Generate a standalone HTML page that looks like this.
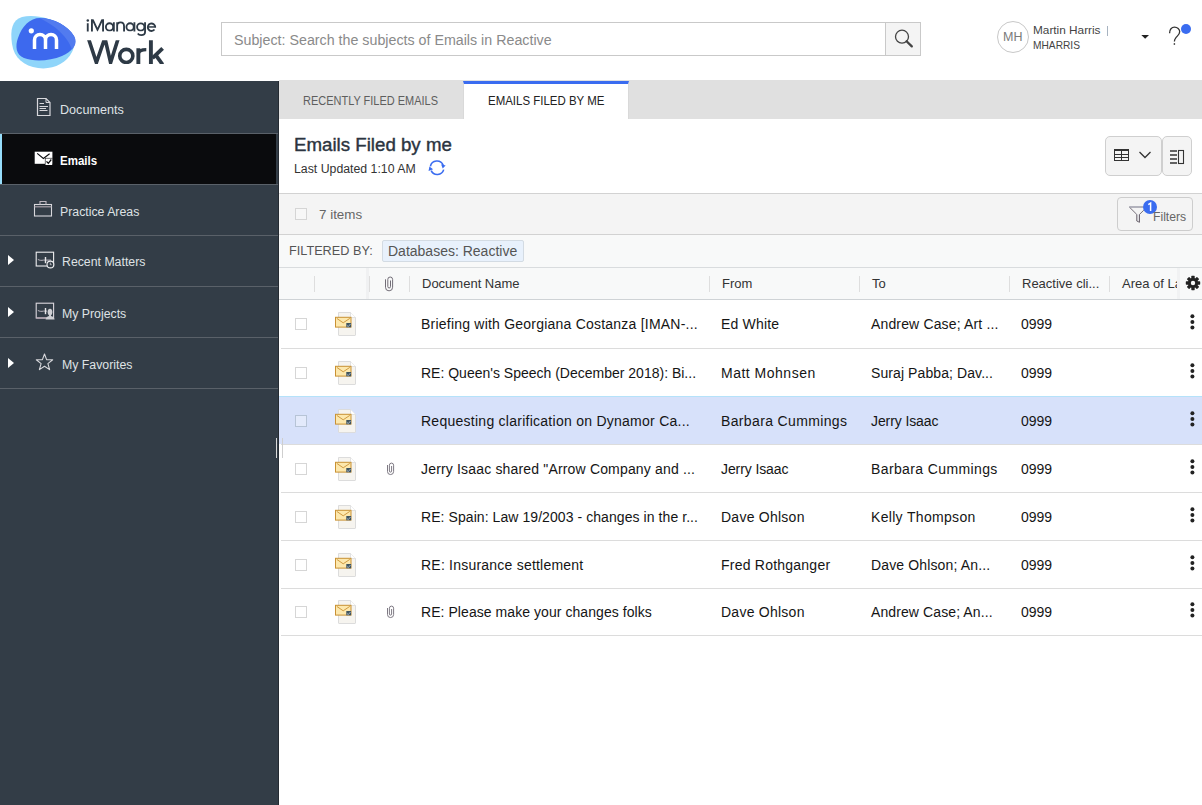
<!DOCTYPE html>
<html><head><meta charset="utf-8">
<style>
*{box-sizing:border-box;margin:0;padding:0}
html,body{width:1202px;height:805px;overflow:hidden;background:#fff;font-family:"Liberation Sans",sans-serif;position:relative}
.abs{position:absolute}
.t{position:absolute;white-space:nowrap;line-height:1}
/* header */
#header{left:0;top:0;width:1202px;height:80px;background:#fff}
#search{left:221px;top:22px;width:700px;height:34px;border:1px solid #c9c9c9;background:#fff}
#sbtn{left:885px;top:22px;width:36px;height:34px;border:1px solid #c9c9c9;background:#f4f4f4}
/* sidebar */
#side{left:0;top:81px;width:279px;height:724px;background:#333d47;border-right:1px solid #252b32}
.sep{position:absolute;left:0;width:278px;height:1px;background:#5a6169}
.nav{color:#dfe2e5;font-size:12.3px}
/* tabs */
#tabs{left:279px;top:80px;width:923px;height:39px;background:#e0e0e0}
#tab2{left:463px;top:81px;width:166px;height:38px;background:#fff;border-top:3px solid #3a6cf0;border-left:1px solid #d9d9d9;border-right:1px solid #d9d9d9}
/* content */
.row{position:absolute;left:279px;width:923px;height:48px}
.cell{position:absolute;font-size:14px;color:#151515;white-space:nowrap;line-height:1}
.cb{position:absolute;width:12px;height:12px;border:1px solid #d3d3d3;background:#fff}
.hsep{position:absolute;top:276px;width:1px;height:16px;background:#dedede}
.kebab{position:absolute;left:1190px;width:5px;height:15px}
.kebab i{position:absolute;left:0.6px;width:3.8px;height:3.8px;border-radius:50%;background:#222;margin-top:0.4px}
</style></head>
<body>
<div id="header" class="abs">
  <!-- logo -->
  <svg class="abs" style="left:0;top:0" width="80" height="80" viewBox="0 0 80 80">
    <path d="M22 17 C34 14 52 18 64 26 C76 34 76 44 72 52 C66 64 52 70 38 68 C24 66 14 58 12 44 C10 30 12 20 22 17 Z" fill="#8fd5fa"/>
    <path d="M40 18 C54 18 68 26 74 36 C78 44 72 52 62 56 C50 61 34 62 24 58 C16 55 15 46 18 38 C22 26 30 18 40 18 Z" fill="#3d69ee"/>
    <path d="M39 17.9 C54 18 68 26 74 36 C77 41 75.5 46 72 49.5 C70 42 60 27 39 17.9 Z" fill="#527bef"/>
    <circle cx="31.3" cy="30.8" r="2.6" fill="#fff"/>
    <path d="M34.5 49 V40 C34.5 36.5 37 34.5 40 34.5 C43 34.5 45.5 36.5 45.5 40 V49 M45.5 40 C45.5 36.5 48 34.5 51 34.5 C54 34.5 56.5 36.5 56.5 40 V49" fill="none" stroke="#fff" stroke-width="3.5"/>
  </svg>
  <svg class="abs" style="left:80px;top:14px" width="84" height="26" viewBox="80 14 84 26">
  <defs><clipPath id="ic"><rect x="80" y="19.3" width="84" height="12.2"/></clipPath></defs>
  <circle cx="87.8" cy="20.6" r="1.25" fill="#2e3a46"/>
  <g fill="none" stroke="#2e3a46" stroke-width="1.85">
    <g clip-path="url(#ic)">
      <path d="M87.75 23.2 V32"/>
      <path d="M91.95 32 V18 L97.5 29.8 L103.05 18 V32" stroke-linejoin="miter" stroke-miterlimit="8"/>
      <circle cx="109.55" cy="26.9" r="3.65"/>
      <path d="M113.85 22.3 V32"/>
      <path d="M117.15 22.3 V32 M117.15 26.2 C117.15 23.6 118.7 22.4 120.6 22.4 C122.7 22.4 124.05 23.7 124.05 26.2 V32"/>
      <circle cx="130.1" cy="26.9" r="3.65"/>
      <path d="M134.4 22.3 V32"/>
      <circle cx="140.75" cy="26.95" r="3.65"/>
    </g>
    <path d="M145.05 22.3 V32 C145.05 34.4 143.4 35.1 141.2 35.1 C139.6 35.1 138.5 34.6 137.8 33.5"/>
  </g>
  <path d="M155.3 27.2 A3.75 3.75 0 1 0 154.5 29.55" fill="none" stroke="#2e3a46" stroke-width="1.85"/>
  <path d="M148 26.95 H156" stroke="#2e3a46" stroke-width="1.5"/>
</svg>
  <svg class="abs" style="left:80px;top:30px" width="90" height="40" viewBox="80 30 90 40">
  <defs><clipPath id="wc"><rect x="80" y="40.2" width="90" height="23.8"/></clipPath></defs>
  <g fill="none" stroke="#2e3a46" stroke-width="3.9" clip-path="url(#wc)">
    <path d="M87.8 36.5 L96.4 62.6 L104.9 38 L110.6 62.6 L118.8 36.5" stroke-linejoin="miter" stroke-miterlimit="10" stroke-width="3.6"/>
    <circle cx="126.3" cy="55.9" r="6.55" stroke-width="3.6"/>
    <path d="M138.35 64.5 V48.2"/>
    <path d="M138.35 53.5 C139 50.5 141.5 49.6 146.3 49.6" stroke-width="3.4"/>
    <path d="M150.9 39 V64.5"/>
    <path d="M152.5 58.2 L162.6 48.4" stroke-width="3.8"/>
    <path d="M155.4 54.6 L162.6 64.5" stroke-width="3.8"/>
  </g>
</svg>
</div>
<div id="search" class="abs"></div>
<div class="t" style="left:234px;top:33px;font-size:14.25px;color:#8a8a8a">Subject: Search the subjects of Emails in Reactive</div>
<div id="sbtn" class="abs">
  <svg class="abs" style="left:0;top:0" width="36" height="34" viewBox="0 0 36 34">
    <circle cx="16" cy="13.7" r="6.5" fill="none" stroke="#444" stroke-width="1.3"/>
    <path d="M20.6 18.3 L25.8 23.4" stroke="#444" stroke-width="2.3" stroke-linecap="round"/>
  </svg>
</div>
<!-- user -->
<div class="abs" style="left:997px;top:21px;width:32px;height:32px;border:1px solid #c8c8c8;border-radius:50%"></div>
<div class="t" style="left:1003px;top:31px;font-size:12.5px;color:#7a7a7a">MH</div>
<div class="t" style="left:1033px;top:25px;font-size:11.8px;color:#444">Martin Harris</div>
<div class="abs" style="left:1107px;top:26px;width:1px;height:10px;background:#a7b3c0"></div>
<div class="t" style="left:1033px;top:41px;font-size:10.2px;color:#444">MHARRIS</div>
<svg class="abs" style="left:1140px;top:34px" width="10" height="6"><path d="M1.3 1 L9 1 L5.15 4.8 Z" fill="#222"/></svg>
<svg class="abs" style="left:1160px;top:20px" width="24" height="28" viewBox="0 0 24 28"><path d="M9.6 13.3 C9.4 9.4 11.8 7.2 14.5 7.2 C17.4 7.2 19.7 9.3 19.7 11.8 C19.7 14.5 17.5 15.8 15.8 17.8 C14.8 19 14.4 20 14.4 21.6" fill="none" stroke="#333" stroke-width="1.3"/><path d="M14.4 23.2 V24.8" stroke="#333" stroke-width="1.4"/></svg>
<div class="abs" style="left:1181px;top:23.8px;width:10px;height:10px;border-radius:50%;background:#3a6cf0"></div>

<!-- sidebar -->
<div id="side" class="abs"></div>
<div class="sep" style="top:133px"></div>
<div class="abs" style="left:0;top:134px;width:276px;height:50px;background:#0a0b0d"></div>
<div class="abs" style="left:0;top:134px;width:2px;height:50px;background:#96ddfa"></div>
<div class="sep" style="top:184px"></div>
<div class="sep" style="top:235px"></div>
<div class="sep" style="top:286px"></div>
<div class="sep" style="top:337px"></div>
<div class="sep" style="top:388px"></div>
<!-- doc icon -->
<svg class="abs" style="left:36px;top:97px" width="16" height="20" viewBox="0 0 16 20">
  <path d="M1.5 1.5 H10 L14 5.5 V18.5 H1.5 Z" fill="none" stroke="#d8d8dc" stroke-width="1.2"/>
  <path d="M10 1.5 V5.5 H14" fill="none" stroke="#d8d8dc" stroke-width="1"/>
  <path d="M3.5 6.5 H8 M3.5 9.5 H12 M3.5 11.5 H10 M3.5 13.5 H11.5" stroke="#d8d8dc" stroke-width="1"/>
</svg>
<div class="t nav" style="left:60px;top:104px;font-size:12.6px">Documents</div>
<!-- email icon -->
<svg class="abs" style="left:34px;top:151px" width="20" height="15" viewBox="0 0 20 15">
  <rect x="0.7" y="0.7" width="17.7" height="12.1" fill="#fff"/>
  <path d="M3.2 2.4 L9.4 7.5 L15.6 2.8" fill="none" stroke="#0a0b0d" stroke-width="1.1"/>
  <rect x="10.9" y="6.9" width="7.6" height="7.6" fill="#0a0b0d"/>
  <rect x="11.5" y="7.5" width="6.7" height="6.5" fill="#fff"/>
  <path d="M12.5 10.4 L14.3 12.3 L17.3 8.5" fill="none" stroke="#0a0b0d" stroke-width="1.3"/>
</svg>
<div class="t nav" style="left:60px;top:155px;color:#fff;font-weight:bold;font-size:12.4px;transform:scaleX(0.93);transform-origin:0 0">Emails</div>
<!-- briefcase -->
<svg class="abs" style="left:33px;top:200px" width="20" height="17" viewBox="0 0 20 17">
  <rect x="1.5" y="4.5" width="17" height="11.5" fill="none" stroke="#d8d8dc" stroke-width="1.1"/>
  <path d="M1.5 6.8 H18.5" stroke="#a9a2ab" stroke-width="1.2"/>
  <path d="M7 4.5 V1.5 H13 V4.5" fill="none" stroke="#bdb6bf" stroke-width="1.1"/>
</svg>
<div class="t nav" style="left:60px;top:206px">Practice Areas</div>
<!-- arrows -->
<svg class="abs" style="left:7px;top:254px" width="8" height="12"><path d="M1 1 L7 6 L1 11 Z" fill="#fff"/></svg>
<svg class="abs" style="left:7px;top:306px" width="8" height="12"><path d="M1 1 L7 6 L1 11 Z" fill="#fff"/></svg>
<svg class="abs" style="left:7px;top:357px" width="8" height="12"><path d="M1 1 L7 6 L1 11 Z" fill="#fff"/></svg>
<!-- recent matters icon -->
<svg class="abs" style="left:35px;top:251px" width="20" height="19" viewBox="0 0 20 19">
  <rect x="1.2" y="1.2" width="17.4" height="13.8" fill="none" stroke="#eeeef0" stroke-width="1.1"/>
  <path d="M2.8 8.4 C4.5 9.4 6.5 9.6 8.5 9.1 H16" fill="none" stroke="#c9c3cc" stroke-width="0.9"/>
  <path d="M10.5 6 V12.2" stroke="#e8e8ea" stroke-width="1.4"/>
  <circle cx="15.4" cy="13.5" r="3.4" fill="#333d47" stroke="#eeeef0" stroke-width="1.1"/>
  <path d="M15.3 11.6 V13.7 H16.6" fill="none" stroke="#d8d8dc" stroke-width="0.8"/>
</svg>
<div class="t nav" style="left:62px;top:256px">Recent Matters</div>
<!-- my projects icon -->
<svg class="abs" style="left:35px;top:302px" width="20" height="19" viewBox="0 0 20 19">
  <rect x="1.2" y="1.2" width="17.4" height="14.8" fill="none" stroke="#dcd8de" stroke-width="1.1"/>
  <path d="M1.2 16 H12" stroke="#b7a6b3" stroke-width="1.2"/>
  <path d="M2.8 8.4 C4.5 9.4 6.5 9.6 8.5 9.1 H12" fill="none" stroke="#c9c3cc" stroke-width="0.9"/>
  <path d="M10.5 6 V12.2" stroke="#e8e8ea" stroke-width="1.4"/>
  <path d="M15 6.8 C13.4 6.8 12.6 8.2 12.6 10 C12.6 11.6 13.3 12.8 14 13.2 L14 14 C12 14.5 11 15.5 10.6 17.6 H19.6 C19.3 15.5 18.2 14.5 16 14 V13.2 C16.8 12.8 17.4 11.6 17.4 10 C17.4 8.2 16.6 6.8 15 6.8 Z" fill="#d0d0d4"/>
</svg>
<div class="t nav" style="left:62px;top:308px">My Projects</div>
<!-- star -->
<svg class="abs" style="left:35px;top:353px" width="19" height="18" viewBox="0 0 19 18">
  <path d="M9.5 1 L11.6 6.6 L17.7 6.8 L12.9 10.6 L14.6 16.6 L9.5 13.2 L4.4 16.6 L6.1 10.6 L1.3 6.8 L7.4 6.6 Z" fill="none" stroke="#d8d8dc" stroke-width="1.1" stroke-linejoin="round"/>
</svg>
<div class="t nav" style="left:62px;top:359px">My Favorites</div>
<div class="abs" style="left:276px;top:438px;width:1px;height:20px;background:#d8d8d8"></div>
<!--HANDLE2-->

<!-- tabs -->
<div id="tabs" class="abs"></div>
<div class="t" style="left:303px;top:95px;font-size:12.8px;color:#5e5e5e;transform:scaleX(0.858);transform-origin:0 0">RECENTLY FILED EMAILS</div>
<div id="tab2" class="abs"></div>
<div class="t" style="left:488px;top:95px;font-size:12.8px;color:#222;transform:scaleX(0.896);transform-origin:0 0">EMAILS FILED BY ME</div>

<!-- title -->
<div class="t" style="left:294px;top:136px;font-size:18.7px;color:#2b3440;-webkit-text-stroke:0.4px #2b3440">Emails Filed by me</div>
<div class="t" style="left:294px;top:163px;font-size:12.3px;color:#333">Last Updated 1:10 AM</div>
<svg class="abs" style="left:428px;top:159px" width="18" height="18" viewBox="0 0 18 18">
  <path d="M2.4 7.4 A6.7 6.7 0 0 1 15.2 6.3" fill="none" stroke="#3a6cf0" stroke-width="1.6"/>
  <path d="M13.1 5.3 L17.6 6.4 L14.7 9.6 Z" fill="#3a6cf0"/>
  <path d="M15.7 10.6 A6.7 6.7 0 0 1 3.2 11.6" fill="none" stroke="#3a6cf0" stroke-width="1.6"/>
  <path d="M0.6 12.1 L5.1 10.3 L1.4 7.6 Z" fill="#3a6cf0"/>
</svg>
<!-- view buttons -->
<div class="abs" style="left:1105px;top:136px;width:57px;height:40px;border:1px solid #cfcfcf;border-radius:5px;background:#f4f4f4"></div>
<div class="abs" style="left:1162px;top:136px;width:30px;height:40px;border:1px solid #cfcfcf;border-radius:5px;background:#f4f4f4"></div>
<svg class="abs" style="left:1113px;top:148px" width="18" height="14" viewBox="0 0 18 14">
  <rect x="1.5" y="1.5" width="14" height="11" fill="none" stroke="#333" stroke-width="1"/>
  <rect x="1" y="1" width="15" height="2" fill="#333"/>
  <path d="M1.5 6.5 H15.5 M1.5 9.5 H15.5 M8.5 1.5 V12.5" stroke="#333" stroke-width="1"/>
</svg>
<svg class="abs" style="left:1138px;top:150px" width="14" height="10" viewBox="0 0 14 10"><path d="M1.5 2 L7 7.5 L12.5 2" fill="none" stroke="#333" stroke-width="1.3"/></svg>
<svg class="abs" style="left:1169px;top:149px" width="16" height="16" viewBox="0 0 16 16">
  <path d="M1 2 H8 M1 6 H8 M1 10 H8 M1 14 H8" stroke="#333" stroke-width="1.6"/>
  <rect x="9.5" y="1.5" width="5" height="13" fill="none" stroke="#333" stroke-width="1.1"/>
</svg>
<!-- toolbar -->
<div class="abs" style="left:279px;top:193px;width:923px;height:1px;background:#d2d2d2"></div>
<div class="abs" style="left:279px;top:194px;width:923px;height:40px;background:#f4f4f4"></div>
<div class="abs" style="left:279px;top:234px;width:923px;height:1px;background:#d2d2d2"></div>
<div class="cb" style="left:295px;top:208px;border-color:#d5d5d5;background:#f7f7f7"></div>
<div class="t" style="left:319px;top:208px;font-size:13.4px;color:#666">7 items</div>
<div class="abs" style="left:1117px;top:197px;width:76px;height:34px;border:1px solid #cdcdcd;border-radius:4px;background:#f4f4f4"></div>
<svg class="abs" style="left:1128px;top:204px" width="18" height="20" viewBox="0 0 18 20">
  <path d="M8.75 10.4 V17 L11.5 18.3 V10.4" fill="#dedee2" stroke="#68616c" stroke-width="0.95" stroke-linejoin="round"/>
  <path d="M1.3 3 L8.75 10.4 M11.5 10.4 L15.8 6.2" fill="none" stroke="#6d6672" stroke-width="0.95"/>
  <path d="M1.3 3 H15.5" stroke="#9c9caa" stroke-width="1.5"/>
</svg>
<div class="abs" style="left:1143px;top:200px;width:14px;height:14px;border-radius:50%;background:#3a6cf0"></div>
<svg class="abs" style="left:1143px;top:200px" width="14" height="14" viewBox="0 0 14 14"><path d="M5.3 4.6 L7.6 3.2 V11" fill="none" stroke="#fff" stroke-width="1.5"/></svg>
<div class="t" style="left:1153px;top:211px;font-size:12.2px;color:#666">Filters</div>
<!-- filter row -->
<div class="abs" style="left:279px;top:235px;width:923px;height:32px;background:#f8f9f9"></div>
<div class="abs" style="left:279px;top:267px;width:923px;height:1px;background:#d9dcde"></div>
<div class="t" style="left:289px;top:245px;font-size:12.7px;color:#555">FILTERED BY:</div>
<div class="abs" style="left:382px;top:240px;width:142px;height:22px;border:1px solid #d3dbe3;border-radius:2px;background:#e8f1fc"></div>
<div class="t" style="left:388px;top:244px;font-size:14px;color:#555">Databases: Reactive</div>
<!-- header row -->
<div class="abs" style="left:279px;top:268px;width:923px;height:31px;background:#f8f9f9"></div>
<div class="abs" style="left:366px;top:268px;width:3px;height:31px;background:#f0f1f2"></div>
<div class="abs" style="left:279px;top:299px;width:923px;height:1px;background:#cfd3d6"></div>
<div class="hsep" style="left:314px"></div>
<div class="hsep" style="left:369px"></div>
<div class="hsep" style="left:409px"></div>
<div class="hsep" style="left:709px"></div>
<div class="hsep" style="left:859px"></div>
<div class="hsep" style="left:1009px"></div>
<div class="hsep" style="left:1109px"></div>
<svg class="abs" style="left:383px;top:276px" width="12" height="16" viewBox="0 0 12 16"><path d="M2.5 3.3 V11.3 A3.55 3.55 0 0 0 9.6 11.3 V3.4 A2.4 2.4 0 0 0 4.8 3.4 V10.6 A1.35 1.35 0 0 0 7.5 10.6 V4.5" fill="none" stroke="#6a6570" stroke-width="0.95"/></svg>
<div class="t" style="left:422px;top:277px;font-size:13px;color:#333">Document Name</div>
<div class="t" style="left:722px;top:277px;font-size:13px;color:#333">From</div>
<div class="t" style="left:872px;top:277px;font-size:13px;color:#333">To</div>
<div class="t" style="left:1022px;top:277px;font-size:13px;color:#333">Reactive cli...</div>
<div class="abs" style="left:1110px;top:268px;width:67px;height:31px;overflow:hidden"><div class="t" style="left:12px;top:9px;font-size:13px;color:#333">Area of Law</div></div>
<div class="abs" style="left:1177px;top:268px;width:25px;height:31px;background:#f8f9f9;border-left:3px solid #f1f2f3"></div>
<svg class="abs" style="left:1185px;top:275px" width="16" height="16" viewBox="0 0 16 16">
  <g fill="#222"><circle cx="8" cy="8" r="5"/>
  <rect x="6.3" y="0.8" width="3.4" height="14.4" rx="0.6"/>
  <rect x="6.3" y="0.8" width="3.4" height="14.4" rx="0.6" transform="rotate(45 8 8)"/>
  <rect x="6.3" y="0.8" width="3.4" height="14.4" rx="0.6" transform="rotate(90 8 8)"/>
  <rect x="6.3" y="0.8" width="3.4" height="14.4" rx="0.6" transform="rotate(135 8 8)"/></g>
  <circle cx="8" cy="8" r="2.2" fill="#f8f9f9"/>
</svg>
<!--ROWS-->
<div class="abs" style="left:281px;top:348px;width:921px;height:1px;background:#dcdcdc"></div>
<div class="cb" style="left:295px;top:318px;background:#fff;border-color:#d6d6d6"></div>
<svg class="abs" style="left:334px;top:311px" width="24" height="26" viewBox="0 0 24 26">
<path d="M4.5 1.5 H16.5 L21.5 6.5 V24 C21.5 24.3 21.3 24.5 21 24.5 H5 C4.7 24.5 4.5 24.3 4.5 24 Z" fill="#f6f4ef" stroke="#dcdcdc" stroke-width="1"/>
<path d="M16.5 1.5 V6.5 H21.5" fill="#fff" stroke="#dcdcdc" stroke-width="0.8"/>
<rect x="1.5" y="6.3" width="15.5" height="9.8" fill="#fde8ad" stroke="#c99133" stroke-width="1"/>
<path d="M2.8 7.4 L9.2 11.8 L15.8 7.4" fill="none" stroke="#c99133" stroke-width="0.9"/>
<rect x="12.3" y="12" width="4.8" height="4.3" fill="#3f5560"/>
<path d="M13 14.5 L14.3 15.6 L16.5 13" fill="none" stroke="#cfd8e8" stroke-width="0.7"/>
</svg>
<div class="cell" style="left:421px;top:317px;letter-spacing:0.22px">Briefing with Georgiana Costanza [IMAN-...</div>
<div class="cell" style="left:721px;top:317px;letter-spacing:0.18px">Ed White</div>
<div class="cell" style="left:871px;top:317px;letter-spacing:0.15px">Andrew Case; Art ...</div>
<div class="cell" style="left:1021px;top:317px">0999</div>
<svg class="abs" style="left:1190px;top:314px" width="5" height="16" viewBox="0 0 5 16"><g fill="#222"><circle cx="2.4" cy="2.3" r="2"/><circle cx="2.4" cy="7.9" r="2"/><circle cx="2.4" cy="13.5" r="2"/></g></svg>
<div class="cb" style="left:295px;top:367px;background:#fff;border-color:#d6d6d6"></div>
<svg class="abs" style="left:334px;top:360px" width="24" height="26" viewBox="0 0 24 26">
<path d="M4.5 1.5 H16.5 L21.5 6.5 V24 C21.5 24.3 21.3 24.5 21 24.5 H5 C4.7 24.5 4.5 24.3 4.5 24 Z" fill="#f6f4ef" stroke="#dcdcdc" stroke-width="1"/>
<path d="M16.5 1.5 V6.5 H21.5" fill="#fff" stroke="#dcdcdc" stroke-width="0.8"/>
<rect x="1.5" y="6.3" width="15.5" height="9.8" fill="#fde8ad" stroke="#c99133" stroke-width="1"/>
<path d="M2.8 7.4 L9.2 11.8 L15.8 7.4" fill="none" stroke="#c99133" stroke-width="0.9"/>
<rect x="12.3" y="12" width="4.8" height="4.3" fill="#3f5560"/>
<path d="M13 14.5 L14.3 15.6 L16.5 13" fill="none" stroke="#cfd8e8" stroke-width="0.7"/>
</svg>
<div class="cell" style="left:421px;top:366px;letter-spacing:0.0px">RE: Queen's Speech (December 2018): Bi...</div>
<div class="cell" style="left:721px;top:366px;letter-spacing:0.5px">Matt Mohnsen</div>
<div class="cell" style="left:871px;top:366px;letter-spacing:0.09px">Suraj Pabba; Dav...</div>
<div class="cell" style="left:1021px;top:366px">0999</div>
<svg class="abs" style="left:1190px;top:363px" width="5" height="16" viewBox="0 0 5 16"><g fill="#222"><circle cx="2.4" cy="2.3" r="2"/><circle cx="2.4" cy="7.9" r="2"/><circle cx="2.4" cy="13.5" r="2"/></g></svg>
<div class="abs" style="left:279px;top:396px;width:923px;height:48px;background:#d7e1fa"></div>
<div class="abs" style="left:279px;top:396px;width:923px;height:1px;background:#b5e2fa"></div>
<div class="abs" style="left:281px;top:444px;width:921px;height:1px;background:#dcdcdc"></div>
<div class="cb" style="left:295px;top:415px;background:#e3eafb;border-color:#b7c4d6"></div>
<svg class="abs" style="left:334px;top:408px" width="24" height="26" viewBox="0 0 24 26">
<path d="M4.5 1.5 H16.5 L21.5 6.5 V24 C21.5 24.3 21.3 24.5 21 24.5 H5 C4.7 24.5 4.5 24.3 4.5 24 Z" fill="#f6f4ef" stroke="#dcdcdc" stroke-width="1"/>
<path d="M16.5 1.5 V6.5 H21.5" fill="#fff" stroke="#dcdcdc" stroke-width="0.8"/>
<rect x="1.5" y="6.3" width="15.5" height="9.8" fill="#fde8ad" stroke="#c99133" stroke-width="1"/>
<path d="M2.8 7.4 L9.2 11.8 L15.8 7.4" fill="none" stroke="#c99133" stroke-width="0.9"/>
<rect x="12.3" y="12" width="4.8" height="4.3" fill="#3f5560"/>
<path d="M13 14.5 L14.3 15.6 L16.5 13" fill="none" stroke="#cfd8e8" stroke-width="0.7"/>
</svg>
<div class="cell" style="left:421px;top:414px;letter-spacing:0.26px">Requesting clarification on Dynamor Ca...</div>
<div class="cell" style="left:721px;top:414px;letter-spacing:0.36px">Barbara Cummings</div>
<div class="cell" style="left:871px;top:414px;letter-spacing:-0.1px">Jerry Isaac</div>
<div class="cell" style="left:1021px;top:414px">0999</div>
<svg class="abs" style="left:1190px;top:411px" width="5" height="16" viewBox="0 0 5 16"><g fill="#222"><circle cx="2.4" cy="2.3" r="2"/><circle cx="2.4" cy="7.9" r="2"/><circle cx="2.4" cy="13.5" r="2"/></g></svg>
<div class="abs" style="left:281px;top:492px;width:921px;height:1px;background:#dcdcdc"></div>
<div class="cb" style="left:295px;top:463px;background:#fff;border-color:#d6d6d6"></div>
<svg class="abs" style="left:334px;top:456px" width="24" height="26" viewBox="0 0 24 26">
<path d="M4.5 1.5 H16.5 L21.5 6.5 V24 C21.5 24.3 21.3 24.5 21 24.5 H5 C4.7 24.5 4.5 24.3 4.5 24 Z" fill="#f6f4ef" stroke="#dcdcdc" stroke-width="1"/>
<path d="M16.5 1.5 V6.5 H21.5" fill="#fff" stroke="#dcdcdc" stroke-width="0.8"/>
<rect x="1.5" y="6.3" width="15.5" height="9.8" fill="#fde8ad" stroke="#c99133" stroke-width="1"/>
<path d="M2.8 7.4 L9.2 11.8 L15.8 7.4" fill="none" stroke="#c99133" stroke-width="0.9"/>
<rect x="12.3" y="12" width="4.8" height="4.3" fill="#3f5560"/>
<path d="M13 14.5 L14.3 15.6 L16.5 13" fill="none" stroke="#cfd8e8" stroke-width="0.7"/>
</svg>
<svg class="abs" style="left:385px;top:461px" width="10" height="15" viewBox="0 0 10 15"><path d="M2.5 4 V10.5 A3.05 3.05 0 0 0 8.6 10.5 V4.2 A2.1 2.1 0 0 0 4.4 4.2 V10 A1.1 1.1 0 0 0 6.6 10 V5" fill="none" stroke="#6f6a75" stroke-width="0.9"/></svg>
<div class="cell" style="left:421px;top:462px;letter-spacing:0.17px">Jerry Isaac shared &quot;Arrow Company and ...</div>
<div class="cell" style="left:721px;top:462px;letter-spacing:-0.1px">Jerry Isaac</div>
<div class="cell" style="left:871px;top:462px;letter-spacing:0.38px">Barbara Cummings</div>
<div class="cell" style="left:1021px;top:462px">0999</div>
<svg class="abs" style="left:1190px;top:459px" width="5" height="16" viewBox="0 0 5 16"><g fill="#222"><circle cx="2.4" cy="2.3" r="2"/><circle cx="2.4" cy="7.9" r="2"/><circle cx="2.4" cy="13.5" r="2"/></g></svg>
<div class="abs" style="left:281px;top:540px;width:921px;height:1px;background:#dcdcdc"></div>
<div class="cb" style="left:295px;top:511px;background:#fff;border-color:#d6d6d6"></div>
<svg class="abs" style="left:334px;top:504px" width="24" height="26" viewBox="0 0 24 26">
<path d="M4.5 1.5 H16.5 L21.5 6.5 V24 C21.5 24.3 21.3 24.5 21 24.5 H5 C4.7 24.5 4.5 24.3 4.5 24 Z" fill="#f6f4ef" stroke="#dcdcdc" stroke-width="1"/>
<path d="M16.5 1.5 V6.5 H21.5" fill="#fff" stroke="#dcdcdc" stroke-width="0.8"/>
<rect x="1.5" y="6.3" width="15.5" height="9.8" fill="#fde8ad" stroke="#c99133" stroke-width="1"/>
<path d="M2.8 7.4 L9.2 11.8 L15.8 7.4" fill="none" stroke="#c99133" stroke-width="0.9"/>
<rect x="12.3" y="12" width="4.8" height="4.3" fill="#3f5560"/>
<path d="M13 14.5 L14.3 15.6 L16.5 13" fill="none" stroke="#cfd8e8" stroke-width="0.7"/>
</svg>
<div class="cell" style="left:421px;top:510px;letter-spacing:0.07px">RE: Spain: Law 19/2003 - changes in the r...</div>
<div class="cell" style="left:721px;top:510px;letter-spacing:0.25px">Dave Ohlson</div>
<div class="cell" style="left:871px;top:510px;letter-spacing:0.32px">Kelly Thompson</div>
<div class="cell" style="left:1021px;top:510px">0999</div>
<svg class="abs" style="left:1190px;top:507px" width="5" height="16" viewBox="0 0 5 16"><g fill="#222"><circle cx="2.4" cy="2.3" r="2"/><circle cx="2.4" cy="7.9" r="2"/><circle cx="2.4" cy="13.5" r="2"/></g></svg>
<div class="abs" style="left:281px;top:588px;width:921px;height:1px;background:#dcdcdc"></div>
<div class="cb" style="left:295px;top:559px;background:#fff;border-color:#d6d6d6"></div>
<svg class="abs" style="left:334px;top:552px" width="24" height="26" viewBox="0 0 24 26">
<path d="M4.5 1.5 H16.5 L21.5 6.5 V24 C21.5 24.3 21.3 24.5 21 24.5 H5 C4.7 24.5 4.5 24.3 4.5 24 Z" fill="#f6f4ef" stroke="#dcdcdc" stroke-width="1"/>
<path d="M16.5 1.5 V6.5 H21.5" fill="#fff" stroke="#dcdcdc" stroke-width="0.8"/>
<rect x="1.5" y="6.3" width="15.5" height="9.8" fill="#fde8ad" stroke="#c99133" stroke-width="1"/>
<path d="M2.8 7.4 L9.2 11.8 L15.8 7.4" fill="none" stroke="#c99133" stroke-width="0.9"/>
<rect x="12.3" y="12" width="4.8" height="4.3" fill="#3f5560"/>
<path d="M13 14.5 L14.3 15.6 L16.5 13" fill="none" stroke="#cfd8e8" stroke-width="0.7"/>
</svg>
<div class="cell" style="left:421px;top:558px;letter-spacing:0.22px">RE: Insurance settlement</div>
<div class="cell" style="left:721px;top:558px;letter-spacing:0.23px">Fred Rothganger</div>
<div class="cell" style="left:871px;top:558px;letter-spacing:0.14px">Dave Ohlson; An...</div>
<div class="cell" style="left:1021px;top:558px">0999</div>
<svg class="abs" style="left:1190px;top:555px" width="5" height="16" viewBox="0 0 5 16"><g fill="#222"><circle cx="2.4" cy="2.3" r="2"/><circle cx="2.4" cy="7.9" r="2"/><circle cx="2.4" cy="13.5" r="2"/></g></svg>
<div class="abs" style="left:281px;top:635px;width:921px;height:1px;background:#dcdcdc"></div>
<div class="cb" style="left:295px;top:606px;background:#fff;border-color:#d6d6d6"></div>
<svg class="abs" style="left:334px;top:599px" width="24" height="26" viewBox="0 0 24 26">
<path d="M4.5 1.5 H16.5 L21.5 6.5 V24 C21.5 24.3 21.3 24.5 21 24.5 H5 C4.7 24.5 4.5 24.3 4.5 24 Z" fill="#f6f4ef" stroke="#dcdcdc" stroke-width="1"/>
<path d="M16.5 1.5 V6.5 H21.5" fill="#fff" stroke="#dcdcdc" stroke-width="0.8"/>
<rect x="1.5" y="6.3" width="15.5" height="9.8" fill="#fde8ad" stroke="#c99133" stroke-width="1"/>
<path d="M2.8 7.4 L9.2 11.8 L15.8 7.4" fill="none" stroke="#c99133" stroke-width="0.9"/>
<rect x="12.3" y="12" width="4.8" height="4.3" fill="#3f5560"/>
<path d="M13 14.5 L14.3 15.6 L16.5 13" fill="none" stroke="#cfd8e8" stroke-width="0.7"/>
</svg>
<svg class="abs" style="left:385px;top:604px" width="10" height="15" viewBox="0 0 10 15"><path d="M2.5 4 V10.5 A3.05 3.05 0 0 0 8.6 10.5 V4.2 A2.1 2.1 0 0 0 4.4 4.2 V10 A1.1 1.1 0 0 0 6.6 10 V5" fill="none" stroke="#6f6a75" stroke-width="0.9"/></svg>
<div class="cell" style="left:421px;top:605px;letter-spacing:0.06px">RE: Please make your changes folks</div>
<div class="cell" style="left:721px;top:605px;letter-spacing:0.25px">Dave Ohlson</div>
<div class="cell" style="left:871px;top:605px;letter-spacing:0.1px">Andrew Case; An...</div>
<div class="cell" style="left:1021px;top:605px">0999</div>
<svg class="abs" style="left:1190px;top:602px" width="5" height="16" viewBox="0 0 5 16"><g fill="#222"><circle cx="2.4" cy="2.3" r="2"/><circle cx="2.4" cy="7.9" r="2"/><circle cx="2.4" cy="13.5" r="2"/></g></svg>
<!--ENDROWS-->
<div class="abs" style="left:282px;top:438px;width:1px;height:20px;background:#cfcfcf"></div>
</body></html>
